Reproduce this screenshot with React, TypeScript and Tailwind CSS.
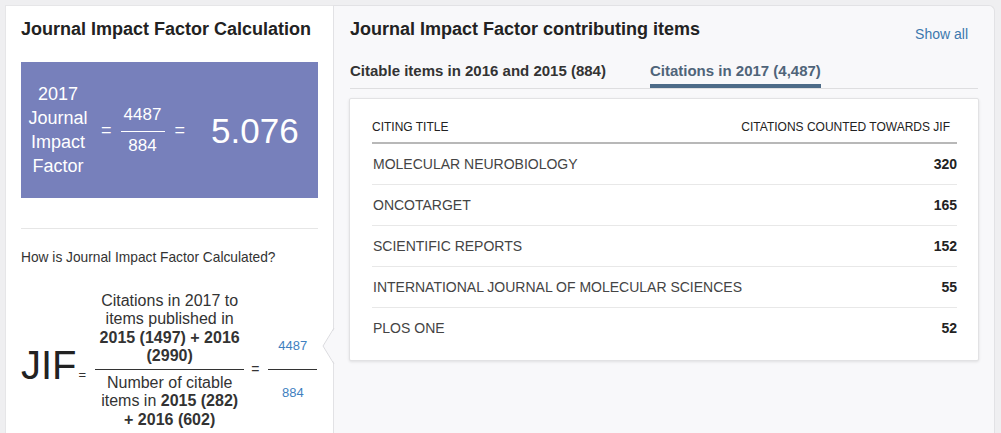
import React from "react";

const rows = [
  { title: "MOLECULAR NEUROBIOLOGY", count: 320 },
  { title: "ONCOTARGET", count: 165 },
  { title: "SCIENTIFIC REPORTS", count: 152 },
  { title: "INTERNATIONAL JOURNAL OF MOLECULAR SCIENCES", count: 55 },
  { title: "PLOS ONE", count: 52 },
];

function CalcCard() {
  return (
    <div className="w-[328px] shrink-0 bg-white border-l border-t border-[#e6e6e8] px-[15px] pt-[12px]">
      <h2 className="text-[18px] leading-[22px] font-bold text-[#222]">Journal Impact Factor Calculation</h2>

      {/* purple summary box */}
      <div className="mt-[22px] h-[136px] bg-[#7780bb] text-white flex items-center">
        <div className="w-[74px] text-center text-[18px] leading-[24px]">
          2017<br />Journal<br />Impact<br />Factor
        </div>
        <div className="ml-[6px] text-[18px]">=</div>
        <div className="ml-[9px] w-[44px] flex flex-col items-center text-[17px] leading-[20px]">
          <span>4487</span>
          <div className="w-full h-px bg-white mt-[6px] mb-[4px]" />
          <span>884</span>
        </div>
        <div className="ml-[10px] text-[18px]">=</div>
        <div className="ml-[26px] text-[35px] leading-none">5.076</div>
      </div>

      <div className="mt-[30px] h-px bg-[#e6e6e6]" />

      <p className="mt-[20px] text-[13.75px] leading-[18px] text-[#333]">How is Journal Impact Factor Calculated?</p>

      <div className="mt-[25px] flex items-center text-[#333]">
        <div className="mt-[8px] flex items-baseline">
          <span className="text-[40px] leading-none text-[#222]">JIF</span>
          <span className="ml-[2px] text-[13px]">=</span>
        </div>
        <div className="ml-[9px] w-[149px] text-center text-[16px] leading-[18.3px]">
          <div>
            Citations in 2017 to<br />items published in<br />
            <b>2015 (1497) + 2016</b><br /><b>(2990)</b>
          </div>
          <div className="h-px bg-[#333] mt-[4px] mb-[4px]" />
          <div>
            Number of citable<br />items in <b>2015 (282)</b><br /><b>+ 2016 (602)</b>
          </div>
        </div>
        <div className="mt-[18px] ml-[7px] text-[14px]">=</div>
        <div className="mt-[18px] ml-[9px] w-[49px] flex flex-col items-center text-[13px] leading-[16px] text-[#3f7fbf]">
          <span>4487</span>
          <div className="w-full h-px bg-[#333] mt-[15px] mb-[15px]" />
          <span>884</span>
        </div>
      </div>
    </div>
  );
}

function ItemsPanel() {
  return (
    <div className="relative w-[662px] shrink-0 bg-[#f8f8fa] border-l border-t border-r border-[#e2e2e5] rounded-tr-[6px] pl-[16px] pr-[15px] pt-[12px]">
      {/* little pointer towards the formula */}
      <svg className="absolute left-[-12px] top-[322px]" width="13" height="36" viewBox="0 0 13 36">
        <polygon points="13,0 1,18 13,36" fill="#f8f8fa" />
        <polyline points="12,0 1,18 12,36" fill="none" stroke="#dcdcdf" strokeWidth="1" />
      </svg>

      <div className="h-[22px] flex items-start justify-between">
        <h2 className="text-[18px] leading-[22px] font-bold text-[#222]">Journal Impact Factor contributing items</h2>
        <a className="mt-[7px] mr-[11px] text-[14px] leading-[18px] text-[#3c78ae]">Show all</a>
      </div>

      <div className="mt-[22px] flex gap-[45px] border-b border-[#dedee0] mr-px">
        <div className="pb-[4px] border-b-4 border-transparent text-[15px] leading-[18px] font-bold text-[#333]">
          Citable items in 2016 and 2015 (884)
        </div>
        <div className="-ml-px pb-[4px] border-b-4 border-[#4d6b88] text-[15px] leading-[18px] font-bold text-[#4f6479]">
          Citations in 2017 (4,487)
        </div>
      </div>

      <div className="mt-[9px] -ml-px bg-white border border-[#e2e2e4] rounded-[2px] shadow-[0_1px_3px_rgba(0,0,0,0.1)] pl-[22px] pr-[21px] pt-[19px] pb-[11px]">
        <div className="flex justify-between pb-[6px] border-b-2 border-[#b8b8b8] text-[12px] leading-[18px] text-[#222]">
          <span>CITING TITLE</span>
          <span className="pr-[7px]">CITATIONS COUNTED TOWARDS JIF</span>
        </div>
        {rows.map((r, i) => (
          <div
            key={r.title}
            className={
              "h-[41px] flex items-center justify-between " +
              (i < rows.length - 1 ? "border-b border-[#e8e8e8]" : "")
            }
          >
            <span className="pl-px text-[14px] text-[#444]">{r.title}</span>
            <span className="text-[14px] font-bold text-[#222]">{r.count}</span>
          </div>
        ))}
      </div>
    </div>
  );
}

export default function App() {
  return (
    <div className="w-[1001px] h-[433px] overflow-hidden bg-[#efeff1] pt-[5px] pl-[5px] flex font-['Liberation_Sans',Arial,sans-serif]">
      <CalcCard />
      <ItemsPanel />
    </div>
  );
}
